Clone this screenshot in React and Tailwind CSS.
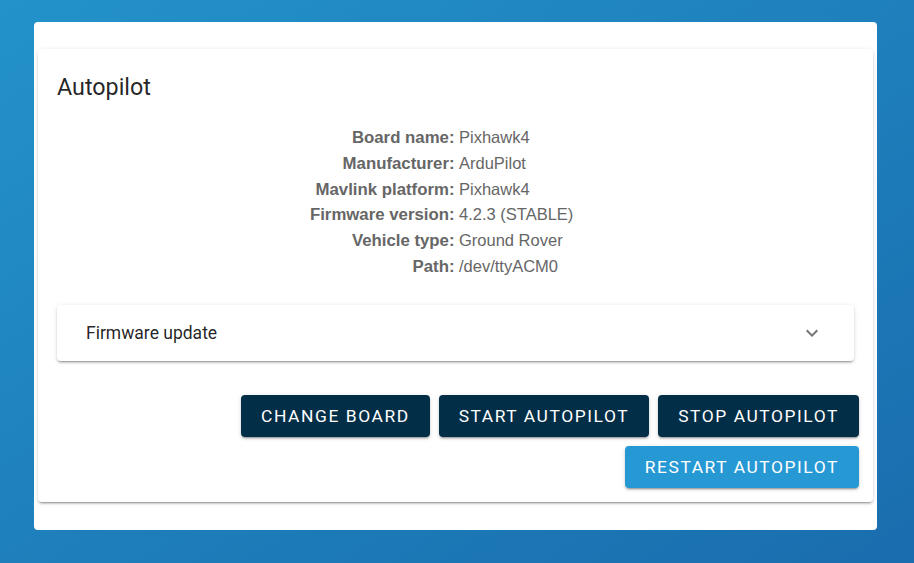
import React from "react";

const rows = [
  ["Board name:", "Pixhawk4"],
  ["Manufacturer:", "ArduPilot"],
  ["Mavlink platform:", "Pixhawk4"],
  ["Firmware version:", "4.2.3 (STABLE)"],
  ["Vehicle type:", "Ground Rover"],
  ["Path:", "/dev/ttyACM0"],
];

function Btn({ children, light }) {
  return (
    <button
      className={
        "h-[42px] px-5 rounded-[4px] text-white text-[17.4px] tracking-[0.09em] uppercase shadow-[0_3px_1px_-2px_rgba(0,0,0,0.2),0_2px_2px_0_rgba(0,0,0,0.14),0_1px_5px_0_rgba(0,0,0,0.12)] " +
        (light ? "bg-[#2699d4]" : "bg-[#032e47]")
      }
    >
      {children}
    </button>
  );
}

export default function App() {
  return (
    <div
      className="w-[914px] h-[563px] bg-gradient-to-br from-[#2392ca] to-[#1a6dae] pt-[22px] pl-[34px]"
      style={{ fontFamily: "Roboto, 'Liberation Sans', sans-serif" }}
    >
      <div className="w-[843px] h-[508px] bg-white rounded-[4px] pt-[27px] px-[4px]">
        <div className="h-[453px] bg-white rounded-[4px] shadow-[0_3px_1px_-2px_rgba(0,0,0,0.2),0_2px_2px_0_rgba(0,0,0,0.14),0_1px_5px_0_rgba(0,0,0,0.12)] pt-[22px] pl-[19px] pr-[14px]">
          <div className="text-[23.3px] leading-[32px] text-[rgba(0,0,0,0.87)]">Autopilot</div>
          <div
            className="mt-[22px] pr-[5px] grid grid-cols-2 text-[16.5px] leading-[25.8px] text-[#666666]"
            style={{ fontFamily: "'Liberation Sans', Arial, sans-serif" }}
          >
            {rows.map(([k, v]) => (
              <React.Fragment key={k}>
                <div className="text-right font-bold pr-[1px] text-[16.8px]">{k}</div>
                <div className="pl-[3.5px]">{v}</div>
              </React.Fragment>
            ))}
          </div>
          <div className="mt-[25px] mr-[5px] h-[56px] rounded-[4px] bg-white shadow-[0_3px_1px_-2px_rgba(0,0,0,0.2),0_2px_2px_0_rgba(0,0,0,0.14),0_1px_5px_0_rgba(0,0,0,0.12)] flex items-center justify-between pl-[29px] pr-[30px]">
            <span className="text-[17.5px] text-[rgba(0,0,0,0.87)]">Firmware update</span>
            <svg width="24" height="24" viewBox="0 0 24 24">
              <path d="M7.41 8.58L12 13.17l4.59-4.59L18 10l-6 6-6-6 1.41-1.42z" fill="#757575" />
            </svg>
          </div>
          <div className="mt-[34px] flex flex-col items-end gap-[9px]">
            <div className="flex gap-[9px]">
              <Btn>Change board</Btn>
              <Btn>Start autopilot</Btn>
              <Btn>Stop autopilot</Btn>
            </div>
            <Btn light>Restart autopilot</Btn>
          </div>
        </div>
      </div>
    </div>
  );
}
